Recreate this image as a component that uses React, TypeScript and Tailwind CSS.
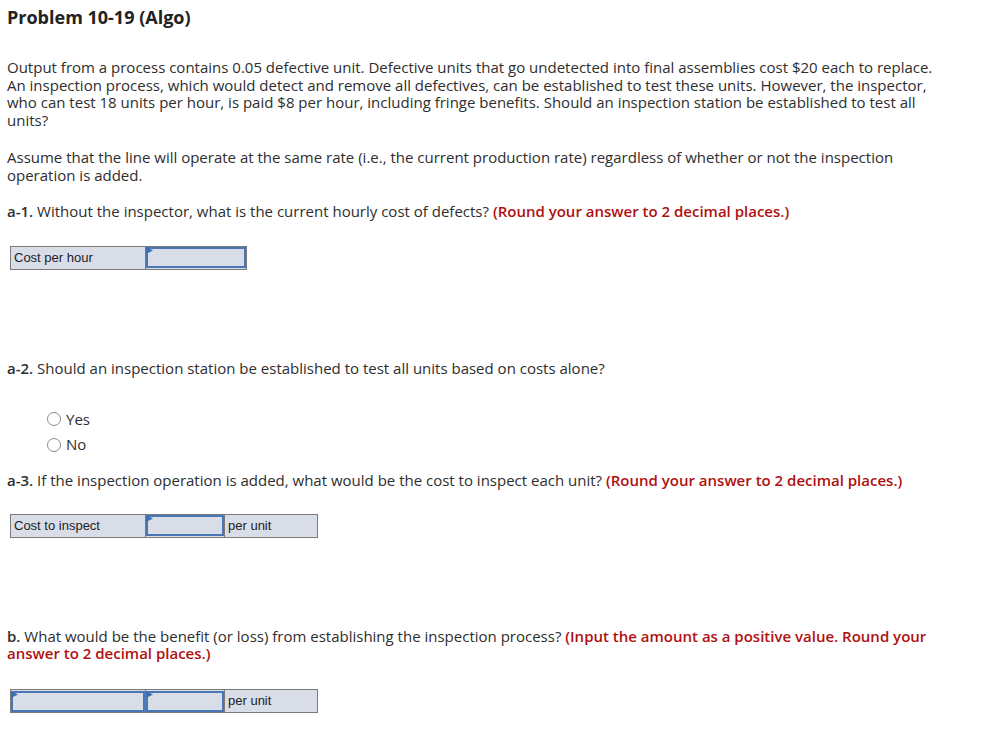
import React from 'react';

const cellLabel = 'h-[23px] border border-[#7a7a7a] bg-[#d9dde8] px-[3px] text-[13px] leading-[20px] text-[#222] whitespace-nowrap';

function InputCell({ w }: { w: string }) {
  return (
    <td className={`${w} h-[23px] border border-[#7a7a7a] bg-[#d9dde8] p-0`}>
      <div className="relative h-[21px] w-full border-2 border-[#4a77b4] bg-[#d9dde8]">
        <svg className="absolute -left-[2px] -top-[2px]" width="7" height="7" viewBox="0 0 7 7">
          <polygon points="0,0 7,3.5 0,7" fill="#3d6fb5" />
        </svg>
      </div>
    </td>
  );
}

function Radio({ label }: { label: string }) {
  return (
    <label className="flex items-center gap-[5px]">
      <span className="inline-block h-[14px] w-[14px] rounded-full border border-[#8a8a8a] bg-white" />
      <span>{label}</span>
    </label>
  );
}

const tableFont = { fontFamily: '"Liberation Sans", Arial, sans-serif' };

export default function App() {
  return (
    <div className="min-h-[750px] w-[996px] bg-white px-[7px] pt-[5px] text-[15px] leading-[17.7px] text-[#2e2e2e] whitespace-nowrap" style={{ fontFamily: '"Open Sans", "Liberation Sans", sans-serif' }}>
      <h1 className="text-[18px] font-bold leading-[24px] text-[#222]">Problem 10-19 (Algo)</h1>

      <p className="mt-[30px]">
        Output from a process contains 0.05 defective unit. Defective units that go undetected into final assemblies cost $20 each to replace.<br />
        An inspection process, which would detect and remove all defectives, can be established to test these units. However, the inspector,<br />
        who can test 18 units per hour, is paid $8 per hour, including fringe benefits. Should an inspection station be established to test all<br />
        units?
      </p>

      <p className="mt-[19px]">
        Assume that the line will operate at the same rate (i.e., the current production rate) regardless of whether or not the inspection<br />
        operation is added.
      </p>

      <p className="mt-[19px]">
        <b className="font-semibold">a-1.</b> Without the inspector, what is the current hourly cost of defects?{' '}
        <b className="font-semibold text-[#b0100f]">(Round your answer to 2 decimal places.)</b>
      </p>

      <table className="ml-[3px] mt-[25px] border-collapse" style={tableFont}>
        <tbody>
          <tr>
            <td className={`${cellLabel} w-[135px]`}>Cost per hour</td>
            <InputCell w="w-[101px]" />
          </tr>
        </tbody>
      </table>

      <p className="mt-[90px]">
        <b className="font-semibold">a-2.</b> Should an inspection station be established to test all units based on costs alone?
      </p>

      <div className="ml-[40px] mt-[33px] flex flex-col gap-[8px]">
        <Radio label="Yes" />
        <Radio label="No" />
      </div>

      <p className="mt-[18px]">
        <b className="font-semibold">a-3.</b> If the inspection operation is added, what would be the cost to inspect each unit?{' '}
        <b className="font-semibold text-[#b0100f]">(Round your answer to 2 decimal places.)</b>
      </p>

      <table className="ml-[3px] mt-[24px] border-collapse" style={tableFont}>
        <tbody>
          <tr>
            <td className={`${cellLabel} w-[135px]`}>Cost to inspect</td>
            <InputCell w="w-[79px]" />
            <td className={`${cellLabel} w-[93px]`}>per unit</td>
          </tr>
        </tbody>
      </table>

      <p className="mt-[90px]">
        <b className="font-semibold">b.</b> What would be the benefit (or loss) from establishing the inspection process?{' '}
        <b className="font-semibold text-[#b0100f]">(Input the amount as a positive value. Round your</b><br />
        <b className="font-semibold text-[#b0100f]">answer to 2 decimal places.)</b>
      </p>

      <table className="ml-[3px] mt-[26px] border-collapse" style={tableFont}>
        <tbody>
          <tr>
            <InputCell w="w-[135px]" />
            <InputCell w="w-[79px]" />
            <td className={`${cellLabel} w-[93px]`}>per unit</td>
          </tr>
        </tbody>
      </table>
    </div>
  );
}
